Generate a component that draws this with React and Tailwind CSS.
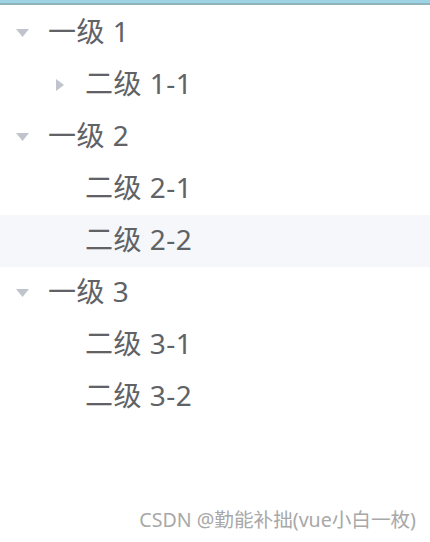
import React, { useState } from "react";

const TREE = [
    {
        id: 1,
        label: "一级 1",
        children: [{ id: 11, label: "二级 1-1", children: [{ id: 111, label: "三级 1-1-1" }] }],
    },
    {
        id: 2,
        label: "一级 2",
        children: [
            { id: 21, label: "二级 2-1" },
            { id: 22, label: "二级 2-2" },
        ],
    },
    {
        id: 3,
        label: "一级 3",
        children: [
            { id: 31, label: "二级 3-1" },
            { id: 32, label: "二级 3-2" },
        ],
    },
];

const Caret = ({ open }) =>
    open ? (
        <svg width="13" height="8" viewBox="0 0 13 8">
            <path d="M0 0 L13 0 L6.5 8 Z" fill="#c0c4cc" />
        </svg>
    ) : (
        <svg width="8" height="12" viewBox="0 0 8 12">
            <path d="M0 0 L8 6 L0 12 Z" fill="#c0c4cc" />
        </svg>
    );

const TreeNode = ({ node, level, expanded, toggle, hovered }) => {
    const hasChildren = node.children && node.children.length > 0;
    const open = expanded.includes(node.id);
    return (
        <>
            <div
                onClick={() => hasChildren && toggle(node.id)}
                className={`flex items-center h-[52px] cursor-pointer ${hovered === node.id ? "bg-[#f5f7fa]" : ""}`}
                style={{ paddingLeft: level * 37 }}
            >
                <span className="w-[48px] flex justify-center items-center shrink-0 pr-[3px]">
                    {hasChildren && <Caret open={open} />}
                </span>
                <span className="text-[28px] text-[#606266] leading-none pb-[4px] tracking-[0.5px]">{node.label}</span>
            </div>
            {hasChildren &&
                open &&
                node.children.map((child) => (
                    <TreeNode
                        key={child.id}
                        node={child}
                        level={level + 1}
                        expanded={expanded}
                        toggle={toggle}
                        hovered={hovered}
                    />
                ))}
        </>
    );
};

const App = () => {
    const [expanded, setExpanded] = useState([1, 2, 3]);

    const toggle = (id) => setExpanded(expanded.includes(id) ? expanded.filter((e) => e !== id) : [...expanded, id]);

    return (
        <div
            className="relative w-[430px] h-[542px] bg-white overflow-hidden"
            style={{ fontFamily: '"Noto Sans", "Noto Sans CJK SC", sans-serif' }}
        >
            <div className="h-[3px] bg-[#9dd3e4]" />
            <div className="h-[2px] bg-[#8fb5bb]" />
            <div className="mt-[2px]">
                {TREE.map((node) => (
                    <TreeNode key={node.id} node={node} level={0} expanded={expanded} toggle={toggle} hovered={22} />
                ))}
            </div>
            <div className="absolute right-[14px] bottom-[8px] text-[19.6px] text-[#a8a8a8] [text-shadow:0_0_1px_#fff]">
                CSDN @勤能补拙(vue小白一枚)
            </div>
        </div>
    );
};

export default App;
